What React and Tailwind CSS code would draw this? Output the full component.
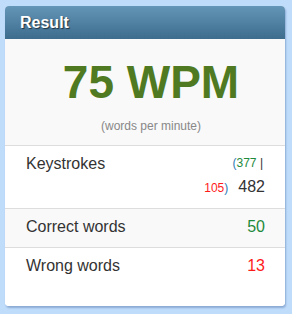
import React from 'react';

const Row = ({ label, children, striped, last, tall }) => (
  <div
    className={`flex justify-between border-t border-[#dddddd] pl-[21px] pr-[20px] pt-[6px] text-[16px] leading-[23px] text-[#333333] ${
      tall ? 'pb-[8px]' : 'pb-[9px]'
    } ${striped ? 'bg-[#f9f9f9]' : 'bg-white'} ${last ? 'flex-1' : ''}`}
  >
    <span>{label}</span>
    <div className="text-right">{children}</div>
  </div>
);

const App = () => {
  return (
    <div
      className="min-h-screen bg-[#c0dcfb] pt-[6px] pl-[5px]"
      style={{ fontFamily: '"Liberation Sans", Arial, sans-serif' }}
    >
      <div className="w-[280px] h-[300px] rounded-[4px] bg-white shadow-[1px_2px_2px_rgba(40,80,140,0.35)] overflow-hidden flex flex-col">
        <div className="h-[33px] shrink-0 flex items-center px-[15px] bg-gradient-to-b from-[#6496b8] to-[#3d6c8d]">
          <span className="text-white font-bold text-[16px] [text-shadow:1px_1px_1px_rgba(0,0,0,0.6)]">
            Result
          </span>
        </div>
        <div className="h-[106px] shrink-0 bg-[#f9f9f9] flex flex-col items-center pl-[12px]">
          <div className="mt-[20px] text-[46px] leading-[46px] font-bold text-[#4f7a21]">75 WPM</div>
          <div className="mt-[13px] text-[12px] leading-[17px] text-[#888888]">(words per minute)</div>
        </div>
        <Row label="Keystrokes" tall>
          <div className="text-[12px] pr-[2px]">
            <span className="text-[#2f78b4]">(</span>
            <span className="text-[#1d8a3c]">377</span>
            <span className="text-[#333333]"> |</span>
          </div>
          <div>
            <span className="text-[12px]">
              <span className="text-[#ff1a1a]">105</span>
              <span className="text-[#2f78b4]">)</span>
            </span>
            <span className="ml-[10px]">482</span>
          </div>
        </Row>
        <Row label="Correct words" striped>
          <span className="text-[#1d8a3c]">50</span>
        </Row>
        <Row label="Wrong words" last>
          <span className="text-[#ff1a1a]">13</span>
        </Row>
      </div>
    </div>
  );
};

export default App;
